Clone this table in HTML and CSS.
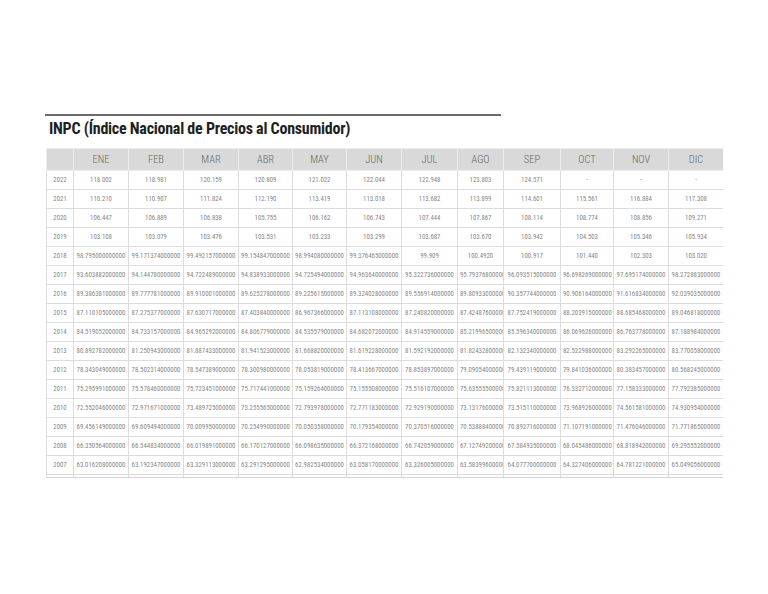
FILE: index.html
```html
<!DOCTYPE html>
<html lang="es">
<head>
<meta charset="utf-8">
<title>INPC</title>
<link rel="stylesheet" href="styles.css">
</head>
<body>
<div class="article">
  <div class="rule"></div>
  <h2 class="title">INPC (Índice Nacional de Precios al Consumidor)</h2>
  <div class="table-wrap">
    <table class="inpc">
      <colgroup>
        <col class="w27"><col class="w55"><col class="w55"><col class="w55"><col class="w54"><col class="w54"><col class="w55"><col class="w56"><col class="w46"><col class="w57"><col class="w53"><col class="w55"><col class="w55">
      </colgroup>
      <thead>
        <tr><th></th><th>ENE</th><th>FEB</th><th>MAR</th><th>ABR</th><th>MAY</th><th>JUN</th><th>JUL</th><th>AGO</th><th>SEP</th><th>OCT</th><th>NOV</th><th>DIC</th></tr>
      </thead>
      <tbody>
        <tr><td>2022</td><td>118.002</td><td>118.981</td><td>120.159</td><td>120.809</td><td>121.022</td><td>122.044</td><td>122.948</td><td>123.803</td><td>124.571</td><td>-</td><td>-</td><td>-</td></tr>
        <tr><td>2021</td><td>110.210</td><td>110.907</td><td>111.824</td><td>112.190</td><td>113.419</td><td>113.018</td><td>113.682</td><td>113.899</td><td>114.601</td><td>115.561</td><td>116.884</td><td>117.308</td></tr>
        <tr><td>2020</td><td>106.447</td><td>106.889</td><td>106.838</td><td>105.755</td><td>106.162</td><td>106.743</td><td>107.444</td><td>107.867</td><td>108.114</td><td>108.774</td><td>108.856</td><td>109.271</td></tr>
        <tr><td>2019</td><td>103.108</td><td>103.079</td><td>103.476</td><td>103.531</td><td>103.233</td><td>103.299</td><td>103.687</td><td>103.670</td><td>103.942</td><td>104.503</td><td>105.346</td><td>105.934</td></tr>
        <tr><td>2018</td><td>98.795000000000</td><td>99.171374000000</td><td>99.492157000000</td><td>99.154847000000</td><td>98.994080000000</td><td>99.376465000000</td><td>99.909</td><td>100.4920</td><td>100.917</td><td>101.440</td><td>102.303</td><td>103.020</td></tr>
        <tr><td>2017</td><td>93.603882000000</td><td>94.144780000000</td><td>94.722489000000</td><td>94.838933000000</td><td>94.725494000000</td><td>94.963640000000</td><td>95.322736000000</td><td>95.793768000000</td><td>96.093515000000</td><td>96.698269000000</td><td>97.695174000000</td><td>98.272883000000</td></tr>
        <tr><td>2016</td><td>89.386381000000</td><td>89.777781000000</td><td>89.910001000000</td><td>89.625278000000</td><td>89.225615000000</td><td>89.324028000000</td><td>89.556914000000</td><td>89.809330000000</td><td>90.357744000000</td><td>90.906164000000</td><td>91.616834000000</td><td>92.039035000000</td></tr>
        <tr><td>2015</td><td>87.110105000000</td><td>87.275377000000</td><td>87.630717000000</td><td>87.403840000000</td><td>86.967366000000</td><td>87.113108000000</td><td>87.240820000000</td><td>87.424876000000</td><td>87.752419000000</td><td>88.203915000000</td><td>88.685468000000</td><td>89.046818000000</td></tr>
        <tr><td>2014</td><td>84.519052000000</td><td>84.733157000000</td><td>84.965292000000</td><td>84.806779000000</td><td>84.535579000000</td><td>84.682072000000</td><td>84.914559000000</td><td>85.219965000000</td><td>85.596340000000</td><td>86.069626000000</td><td>86.763778000000</td><td>87.188984000000</td></tr>
        <tr><td>2013</td><td>80.892782000000</td><td>81.250943000000</td><td>81.887433000000</td><td>81.941523000000</td><td>81.668820000000</td><td>81.619228000000</td><td>81.592192000000</td><td>81.824328000000</td><td>82.132340000000</td><td>82.522988000000</td><td>83.292265000000</td><td>83.770058000000</td></tr>
        <tr><td>2012</td><td>78.343049000000</td><td>78.502314000000</td><td>78.547389000000</td><td>78.300980000000</td><td>78.053819000000</td><td>78.413667000000</td><td>78.853897000000</td><td>79.090540000000</td><td>79.439119000000</td><td>79.841036000000</td><td>80.383457000000</td><td>80.568245000000</td></tr>
        <tr><td>2011</td><td>75.295991000000</td><td>75.578460000000</td><td>75.723451000000</td><td>75.717441000000</td><td>75.159264000000</td><td>75.155508000000</td><td>75.516107000000</td><td>75.635555000000</td><td>75.821113000000</td><td>76.332712000000</td><td>77.158333000000</td><td>77.792385000000</td></tr>
        <tr><td>2010</td><td>72.552046000000</td><td>72.971671000000</td><td>73.489725000000</td><td>73.255565000000</td><td>72.793978000000</td><td>72.771183000000</td><td>72.929190000000</td><td>73.131760000000</td><td>73.515110000000</td><td>73.968926000000</td><td>74.561581000000</td><td>74.930954000000</td></tr>
        <tr><td>2009</td><td>69.456149000000</td><td>69.609494000000</td><td>70.009950000000</td><td>70.254990000000</td><td>70.050358000000</td><td>70.179354000000</td><td>70.370516000000</td><td>70.538884000000</td><td>70.892716000000</td><td>71.107191000000</td><td>71.476046000000</td><td>71.771865000000</td></tr>
        <tr><td>2008</td><td>66.350564000000</td><td>66.544834000000</td><td>66.019891000000</td><td>66.170127000000</td><td>66.098635000000</td><td>66.372168000000</td><td>66.742059000000</td><td>67.127492000000</td><td>67.584935000000</td><td>68.045486000000</td><td>68.818942000000</td><td>69.295552000000</td></tr>
        <tr><td>2007</td><td>63.016208000000</td><td>63.192347000000</td><td>63.329113000000</td><td>63.291295000000</td><td>62.982534000000</td><td>63.058170000000</td><td>63.326005000000</td><td>63.583996000000</td><td>64.077700000000</td><td>64.327406000000</td><td>64.781221000000</td><td>65.049056000000</td></tr>
        <tr><td></td><td></td><td></td><td></td><td></td><td></td><td></td><td></td><td></td><td></td><td></td><td></td><td></td></tr>
      </tbody>
    </table>
  </div>
</div>
</body>
</html>
```
FILE: styles.css
```css
* { box-sizing: border-box; }
html, body { margin: 0; background: #fff; }
body { font-family: "Roboto Condensed", Roboto, "Liberation Sans", sans-serif; }

.article { padding: 114px 0 0 45px; }
.rule { width: 456px; height: 2px; background: #6a6a6a; }
.title {
  margin: 3px 0 0 4px;
  font-size: 16px;
  line-height: 20px;
  font-weight: 700;
  letter-spacing: -0.25px;
  color: #1f1f1f;
  font-stretch: 75%;
  white-space: nowrap;
}
.table-wrap {
  margin: 9px 0 0 1px;
  width: 677px;
  height: 330px;
  overflow: hidden;
  border-bottom: 1px solid #d4d4d4;
}
.inpc { border-collapse: collapse; table-layout: fixed; width: 677px; }
.w27 { width: 27px; }
.w46 { width: 46px; }
.w53 { width: 53px; }
.w54 { width: 54px; }
.w55 { width: 55px; }
.w56 { width: 56px; }
.w57 { width: 57px; }
.inpc th, .inpc td {
  border: 1px solid #dcdcdc;
  padding: 0 2px;
  text-align: center;
  white-space: nowrap;
  overflow: hidden;
  font-stretch: 75%;
}
.inpc th {
  height: 22px;
  background: #d9d9d9;
  border-color: #ececec;
  font-size: 10.5px;
  font-weight: 300;
  color: #666;
}
.inpc td {
  height: 19px;
  font-size: 6.8px;
  color: #878787;
}
```
